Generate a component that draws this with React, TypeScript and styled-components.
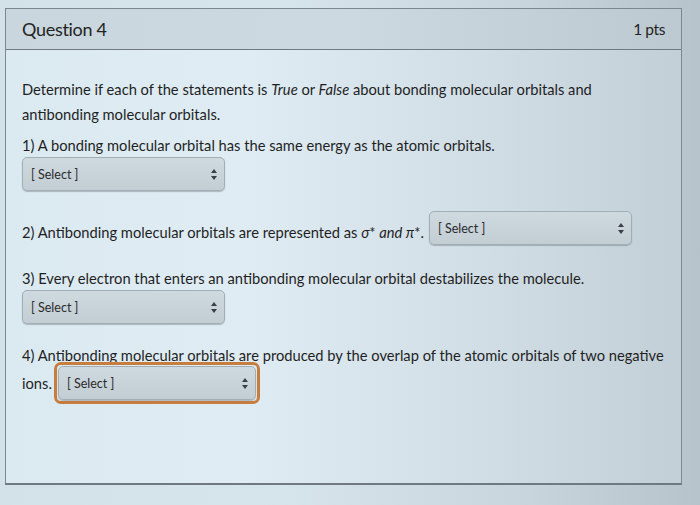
import styled, { createGlobalStyle } from "styled-components";

const GlobalStyle = createGlobalStyle`
  html, body {
    margin: 0;
    padding: 0;
  }
  body {
    width: 700px;
    height: 505px;
    overflow: hidden;
    background: linear-gradient(90deg, #d3e1e9 0%, #d6e4ec 40%, #c9d5dd 75%, #b7c3cb 100%);
    font-family: Lato, "Open Sans", "Liberation Sans", sans-serif;
    color: #222;
  }
`;

const Page = styled.div`
  padding: 8px 0 0 5px;
`;

const Card = styled.div`
  width: 677px;
  height: 477px;
  box-sizing: border-box;
  border: 1px solid #7d878e;
  border-bottom: 2px solid #6f7980;
  background: linear-gradient(90deg, #dbe9f1 0%, #dfecf3 35%, #d2dee6 70%, #c3cfd7 100%);
  display: flex;
  flex-direction: column;
`;

const Header = styled.div`
  height: 41px;
  box-sizing: border-box;
  border-bottom: 1px solid #6f7980;
  background: linear-gradient(90deg, #c9d6de 0%, #ccd9e1 50%, #bdc9d1 100%);
  display: flex;
  align-items: center;
  justify-content: space-between;
  padding: 0 16px 0 16px;
`;

const Title = styled.span`
  font-size: 18px;
  letter-spacing: -0.3px;
  color: #232323;
`;

const Points = styled.span`
  font-size: 15.5px;
  letter-spacing: -0.4px;
  color: #232323;
`;

const Body = styled.div`
  padding: 27px 16px 0 16px;
  font-size: 14.7px;
  color: #1f1f1f;
  white-space: nowrap;
`;

const Intro = styled.p`
  margin: 0;
  line-height: 25px;
`;

const Item = styled.div<{ $top: number }>`
  margin-top: ${(p) => p.$top}px;
`;

const Line = styled.div`
  line-height: 24px;
`;

const Row = styled.div<{ $gap: number; $top?: number }>`
  display: flex;
  align-items: center;
  gap: ${(p) => p.$gap}px;
  margin-top: ${(p) => p.$top ?? 0}px;
`;

const Shifted = styled.span`
  padding-top: 8px;
`;

const SelectBox = styled.div<{ $width: number }>`
  width: ${(p) => p.$width}px;
  height: 34px;
  box-sizing: border-box;
  border: 1px solid #a3adb4;
  border-radius: 5px;
  background: linear-gradient(180deg, #cfd9e0 0%, #c3cdd4 100%);
  box-shadow: 0 1px 1px rgba(80, 90, 100, 0.35);
  display: flex;
  align-items: center;
  justify-content: space-between;
  padding: 0 7px 0 8px;
  font-size: 12.5px;
  color: #2a2a2a;
`;

const FocusRing = styled.div`
  border: 3px solid #c67d3e;
  border-radius: 7px;
  padding: 1px;
  display: flex;
`;

const Arrows = () => (
  <svg width="6" height="11" viewBox="0 0 6 11">
    <path d="M3 0 L6 4 L0 4 Z" fill="#3a3f44" />
    <path d="M0 7 L6 7 L3 11 Z" fill="#3a3f44" />
  </svg>
);

const Select = ({ width = 203 }: { width?: number }) => (
  <SelectBox $width={width}>
    <span>[ Select ]</span>
    <Arrows />
  </SelectBox>
);

export default function App() {
  return (
    <>
      <GlobalStyle />
      <Page>
        <Card>
          <Header>
            <Title>Question 4</Title>
            <Points>1 pts</Points>
          </Header>
          <Body>
            <Intro>
              Determine if each of the statements is <i>True</i> or <i>False</i> about bonding
              molecular orbitals and
              <br />
              antibonding molecular orbitals.
            </Intro>
            <Item $top={6}>
              <Line>1) A bonding molecular orbital has the same energy as the atomic orbitals.</Line>
              <Select />
            </Item>
            <Item $top={20}>
              <Row $gap={5}>
                <Shifted>
                  2) Antibonding molecular orbitals are represented as <i>σ</i>* <i>and π</i>*.
                </Shifted>
                <Select />
              </Row>
            </Item>
            <Item $top={21}>
              <Line>
                3) Every electron that enters an antibonding molecular orbital destabilizes the
                molecule.
              </Line>
              <Select />
            </Item>
            <Item $top={19}>
              <Line>
                4) Antibonding molecular orbitals are produced by the overlap of the atomic
                orbitals of two negative
              </Line>
              <Row $gap={2} $top={-5}>
                <span>ions.</span>
                <FocusRing>
                  <Select width={198} />
                </FocusRing>
              </Row>
            </Item>
          </Body>
        </Card>
      </Page>
    </>
  );
}
